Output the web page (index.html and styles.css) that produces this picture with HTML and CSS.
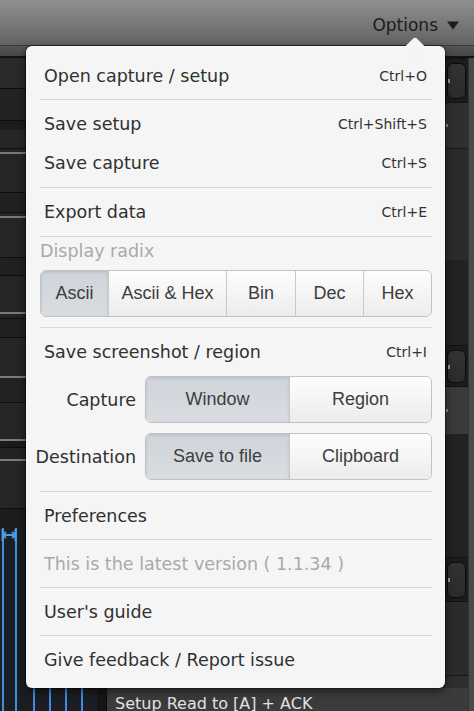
FILE: index.html
```html
<!DOCTYPE html>
<html lang="en">
<head>
<meta charset="utf-8">
<title>Options</title>
<link rel="stylesheet" href="styles.css">
</head>
<body>
<div class="screen">
  <header class="topbar">
    <div class="options"><span>Options</span><svg class="caret" width="12" height="9" viewBox="0 0 12 9"><path d="M0 0.5H12L6 8.5Z"/></svg></div>
  </header>
  <div class="toolstrip"></div>
  <div class="tracks">
    <div class="lstrip">
      <div class="lanes"></div>
      <div class="scope narrow">
        <svg class="marker" width="22" height="14" viewBox="0 0 22 14"><path d="M3.5 1V13M16.5 1V13M3.5 7H16.5M3.5 7L7 4M3.5 7L7 10M16.5 7L13 4M16.5 7L13 10" stroke="#4a9be6" stroke-width="2" fill="none"/></svg>
      </div>
    </div>
    <div class="center"></div>
    <div class="rstrip">
      <div class="rbtn"><span></span></div>
      <div class="rfill r1 dot"></div>
      <div class="rfill r2"></div>
      <div class="rfill r3"></div>
      <div class="rbtn short"><span></span></div>
      <div class="rfill r4 dot"></div>
      <div class="rfill r5"></div>
      <div class="rbtn"><span></span></div>
      <div class="rfill r6"></div>
      <div class="rfill r7"></div>
    </div>
    <div class="scrollcol"></div>
  </div>
  <div class="footer">
    <div class="scope wide"></div>
    <div class="divider"></div>
    <div class="logpanel">Setup Read to [A] + ACK</div>
    <div class="scrollcol"></div>
  </div>

  <div class="popup">
    <div class="group">
      <div class="item"><span>Open capture / setup</span><span class="key">Ctrl+O</span></div>
    </div>
    <div class="sep"></div>
    <div class="group two">
      <div class="item"><span>Save setup</span><span class="key">Ctrl+Shift+S</span></div>
      <div class="item"><span>Save capture</span><span class="key">Ctrl+S</span></div>
    </div>
    <div class="sep"></div>
    <div class="group pb5">
      <div class="item"><span>Export data</span><span class="key">Ctrl+E</span></div>
    </div>
    <div class="sep"></div>
    <div class="group radix">
      <div class="caption">Display radix</div>
      <div class="seg seg5">
        <div class="opt on">Ascii</div>
        <div class="opt">Ascii &amp; Hex</div>
        <div class="opt">Bin</div>
        <div class="opt">Dec</div>
        <div class="opt">Hex</div>
      </div>
    </div>
    <div class="sep"></div>
    <div class="group shot">
      <div class="item"><span>Save screenshot / region</span><span class="key">Ctrl+I</span></div>
      <div class="field">
        <div class="label">Capture</div>
        <div class="seg seg2">
          <div class="opt on">Window</div>
          <div class="opt">Region</div>
        </div>
      </div>
      <div class="field">
        <div class="label">Destination</div>
        <div class="seg seg2">
          <div class="opt on">Save to file</div>
          <div class="opt">Clipboard</div>
        </div>
      </div>
    </div>
    <div class="sep"></div>
    <div class="group">
      <div class="item"><span>Preferences</span></div>
    </div>
    <div class="sep"></div>
    <div class="group">
      <div class="item muted"><span>This is the latest version ( 1.1.34 )</span></div>
    </div>
    <div class="sep"></div>
    <div class="group">
      <div class="item"><span>User's guide</span></div>
    </div>
    <div class="sep"></div>
    <div class="group">
      <div class="item"><span>Give feedback / Report issue</span></div>
    </div>
  </div>
</div>
</body>
</html>
```

FILE: styles.css
```css
* { box-sizing: border-box; }

html, body { margin: 0; padding: 0; }

body {
  width: 474px;
  height: 711px;
  overflow: hidden;
  background: #232323;
  font-family: "DejaVu Sans", "Liberation Sans", sans-serif;
}

.screen {
  position: relative;
  width: 474px;
  height: 711px;
  overflow: hidden;
  display: flex;
  flex-direction: column;
}

/* ---------- top bar ---------- */
.topbar {
  flex: none;
  height: 46px;
  background: linear-gradient(#8f8f8f, #777 55%, #626262);
  border-bottom: 1px solid #3a3a3a;
  display: flex;
  justify-content: flex-end;
  align-items: flex-start;
  padding: 15px 15px 0 0;
}

.options {
  display: flex;
  align-items: center;
  gap: 9px;
  font-size: 17px;
  line-height: 20px;
  color: #1c1c1c;
}

.caret { fill: #1c1c1c; margin-top: 1px; }

.toolstrip {
  flex: none;
  height: 12px;
  background: linear-gradient(#555, #474747);
  border-bottom: 2px solid #131313;
}

/* ---------- tracks behind the popover ---------- */
.tracks {
  flex: none;
  height: 630px;
  display: grid;
  grid-template-columns: 26px 1fr 23px 6px;
}

.lstrip {
  display: flex;
  flex-direction: column;
}

.lanes {
  flex: none;
  height: 470px;
  background: linear-gradient(to bottom,
    #2a2a2a 0 30px, #0d0d0d 30px 31px,
    #232323 31px 62px, #0d0d0d 62px 63px,
    #1d1d1d 63px 72px, #272727 72px 90px, #0d0d0d 90px 91px,
    #252525 91px 94px, #7a7a7a 94px 96px,
    #262626 96px 134px, #0d0d0d 134px 135px,
    #212121 135px 154px, #0d0d0d 154px 155px,
    #252525 155px 158px, #7a7a7a 158px 160px,
    #262626 160px 199px, #0d0d0d 199px 200px,
    #212121 200px 217px, #0d0d0d 217px 218px,
    #262626 218px 254px, #7a7a7a 254px 256px,
    #232323 256px 260px, #0d0d0d 260px 261px,
    #212121 261px 279px, #0d0d0d 279px 280px,
    #262626 280px 318px, #7a7a7a 318px 320px,
    #222 320px 344px, #0d0d0d 344px 345px,
    #262626 345px 381px, #7a7a7a 381px 383px,
    #1b1b1b 383px 389px, #0d0d0d 389px 390px,
    #222 390px 401px, #7a7a7a 401px 403px,
    #262626 403px 450px, #0d0d0d 450px 451px,
    #1c1c1c 451px 470px);
}

.scope {
  position: relative;
  background-color: #1a1d22;
  background-repeat: no-repeat;
}

.scope.narrow {
  flex: 1;
  background-image:
    linear-gradient(#3f8fdc, #3f8fdc),
    linear-gradient(#3f8fdc, #3f8fdc);
  background-size: 2px 100%, 2px 100%;
  background-position: 2px 0, 15px 0;
}

.marker {
  position: absolute;
  left: -1px;
  top: 0;
}

.center { background: #262626; }

.rstrip {
  display: flex;
  flex-direction: column;
  background: #1b1b1b;
}

.rbtn {
  flex: none;
  height: 45px;
  padding: 4px 2px 3px 2px;
  background: #1c1c1c;
  border-top: 1px solid #111;
  border-bottom: 1px solid #111;
}

.rbtn.short { height: 42px; }

.rbtn span {
  position: relative;
  display: block;
  height: 100%;
  background: linear-gradient(#333, #2b2b2b);
  border: 1px solid #0b0b0b;
  border-radius: 6px;
}

.rbtn span::after {
  content: "";
  position: absolute;
  left: 0;
  top: 50%;
  width: 2px;
  height: 4px;
  margin-top: -2px;
  background: #9a9a9a;
}

.rfill { flex: none; position: relative; }
.r1 { height: 46px; background: #2f2f2f; border-bottom: 1px solid #1a1a1a; }
.r2 { height: 111px; background: #2b2b2b; }
.r3 { height: 85px; background: #222; }
.r4 { height: 47px; background: #3a3a3a; }
.r5 { height: 123px; background: #222; }
.r6 { height: 73px; background: #2b2b2b; }
.r7 { flex: 1; background: #2e2e2e; border-top: 1px solid #141414; }

.dot::after {
  content: "";
  position: absolute;
  left: 1px;
  top: 50%;
  width: 2px;
  height: 3px;
  margin-top: -2px;
  background: #8a8a8a;
}

.scrollcol {
  background: #4a4a4a;
  border-left: 1px solid #333;
}

/* ---------- footer ---------- */
.footer {
  flex: 1;
  display: grid;
  grid-template-columns: 97px 10px 1fr 6px;
}

.scope.wide {
  background-image:
    linear-gradient(#3f8fdc, #3f8fdc),
    linear-gradient(#3f8fdc, #3f8fdc),
    linear-gradient(#3f8fdc, #3f8fdc),
    linear-gradient(#3f8fdc, #3f8fdc),
    linear-gradient(#3f8fdc, #3f8fdc),
    linear-gradient(#3f8fdc, #3f8fdc);
  background-size: 2px 100%, 2px 100%, 2px 100%, 2px 100%, 2px 100%, 2px 100%;
  background-position: 2px 0, 15px 0, 33px 0, 49px 0, 65px 0, 81px 0;
}

.divider { background: #151515; border-right: 1px solid #0c0c0c; }

.logpanel {
  background: #3b3b3b;
  color: #e2e2e2;
  font-size: 16px;
  line-height: 20px;
  padding: 6px 0 0 8px;
  white-space: nowrap;
  overflow: hidden;
}

/* ---------- popover ---------- */
.popup {
  position: absolute;
  left: 26px;
  top: 46px;
  width: 419px;
  height: 642px;
  background: #f5f5f5;
  border-radius: 6px;
  box-shadow: 0 0 0 1px rgba(0, 0, 0, 0.3), 0 3px 10px rgba(0, 0, 0, 0.55);
  padding: 6px 13px 5px 14px;
  display: flex;
  flex-direction: column;
  color: #303030;
}

.popup::before {
  content: "";
  position: absolute;
  left: 381px;
  top: -6px;
  width: 16px;
  height: 16px;
  background: #f5f5f5;
  transform: rotate(45deg);
  border-top-left-radius: 3px;
}

.sep {
  flex: none;
  height: 1px;
  background: #dadada;
}

.group {
  position: relative;
  flex: none;
  padding: 4px 0;
}

.group.two, .group.pb5 { padding-bottom: 5px; }

.item {
  height: 39px;
  display: flex;
  align-items: center;
  justify-content: space-between;
  padding: 0 5px 0 4px;
  font-size: 17.5px;
  white-space: nowrap;
}

.key {
  font-size: 14px;
  color: #333;
}

.muted { color: #a9a9a9; }

.group.radix { padding: 4px 0 10px; }

.caption {
  height: 20px;
  line-height: 20px;
  margin-bottom: 9px;
  font-size: 17.5px;
  color: #a9a9a9;
}

.seg {
  height: 47px;
  display: grid;
  border: 1px solid #c2c2c2;
  border-radius: 6px;
  overflow: hidden;
  font-family: "Liberation Sans", Arial, sans-serif;
  font-size: 18px;
  color: #3d3d3d;
}

.seg5 { grid-template-columns: 67px 118px 69px 68px 1fr; }
.seg2 { grid-template-columns: 143px 1fr; }

.opt {
  display: flex;
  align-items: center;
  justify-content: center;
  white-space: nowrap;
  background: linear-gradient(#fdfdfd, #ececec);
}

.opt + .opt { border-left: 1px solid #c9c9c9; }

.opt.on {
  background: linear-gradient(#cfd4da, #d9dde2);
  box-shadow: inset 0 1px 3px rgba(0, 0, 0, 0.12);
}

.group.shot { padding: 4px 0 11px; }

.field {
  display: flex;
  align-items: center;
  gap: 9px;
  margin-top: 5px;
}

.field + .field { margin-top: 10px; }

.label {
  flex: none;
  width: 96px;
  display: flex;
  justify-content: flex-end;
  font-size: 17.5px;
  white-space: nowrap;
  color: #303030;
}

.field .seg { flex: 1; }
```
